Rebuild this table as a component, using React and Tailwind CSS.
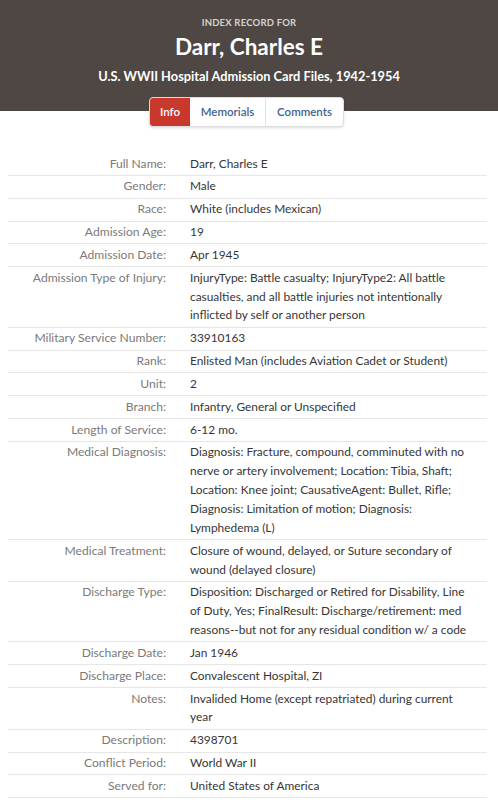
const rows = [
  ['Full Name:', 'Darr, Charles E'],
  ['Gender:', 'Male'],
  ['Race:', 'White (includes Mexican)'],
  ['Admission Age:', '19'],
  ['Admission Date:', 'Apr 1945'],
  ['Admission Type of Injury:', 'InjuryType: Battle casualty; InjuryType2: All battle casualties, and all battle injuries not intentionally inflicted by self or another person'],
  ['Military Service Number:', '33910163'],
  ['Rank:', 'Enlisted Man (includes Aviation Cadet or Student)'],
  ['Unit:', '2'],
  ['Branch:', 'Infantry, General or Unspecified'],
  ['Length of Service:', '6-12 mo.'],
  ['Medical Diagnosis:', 'Diagnosis: Fracture, compound, comminuted with no nerve or artery involvement; Location: Tibia, Shaft; Location: Knee joint; CausativeAgent: Bullet, Rifle; Diagnosis: Limitation of motion; Diagnosis: Lymphedema (L)'],
  ['Medical Treatment:', 'Closure of wound, delayed, or Suture secondary of wound (delayed closure)'],
  ['Discharge Type:', 'Disposition: Discharged or Retired for Disability, Line of Duty, Yes; FinalResult: Discharge/retirement: med reasons--but not for any residual condition w/ a code'],
  ['Discharge Date:', 'Jan 1946'],
  ['Discharge Place:', 'Convalescent Hospital, ZI'],
  ['Notes:', 'Invalided Home (except repatriated) during current year'],
  ['Description:', '4398701'],
  ['Conflict Period:', 'World War II'],
  ['Served for:', 'United States of America'],
];

export default function App() {
  return (
    <div className="min-h-[800px] bg-white font-['Lato',sans-serif]">
      {/* Header */}
      <header className="bg-[#4e4743] pt-[17px] pb-[26px] text-center">
        <p className="text-[9.5px] font-bold uppercase tracking-[0.2px] text-[#d6d2cf] leading-[12px]">Index Record For</p>
        <h1 className="mt-[4px] text-[22.5px] font-bold text-white leading-[28px]">Darr, Charles E</h1>
        <p className="mt-[6px] text-[12.8px] font-bold text-white leading-[18px]">U.S. WWII Hospital Admission Card Files, 1942-1954</p>
      </header>

      {/* Tabs */}
      <div className="-mt-[14px] flex justify-center pr-[5px]">
        <div className="flex h-[30px] w-[195px] overflow-hidden rounded-[4px] border border-[#dcdcdc] bg-white text-[11.5px] font-semibold shadow-sm">
          <div className="flex w-[40px] items-center justify-center bg-[#c8382d] text-white">Info</div>
          <div className="flex w-[76px] items-center justify-center border-r border-[#e2e2e2] text-[#3f6390]">Memorials</div>
          <div className="flex flex-1 items-center justify-center text-[#3f6390]">Comments</div>
        </div>
      </div>

      {/* Record table */}
      <div className="mx-[8px] mt-[26px] w-[479px] leading-[18.85px]">
        {rows.map(([label, value]) => (
          <div key={label} className="flex border-b border-[#e6e6e6] py-[1.5px]">
            <div className="w-[158px] shrink-0 text-right text-[12.1px] text-[#7a7a7a]">{label}</div>
            <div className="flex-1 pl-[24px] pr-[13px] text-[11.9px] text-[#363636]">{value}</div>
          </div>
        ))}
      </div>
    </div>
  );
}
